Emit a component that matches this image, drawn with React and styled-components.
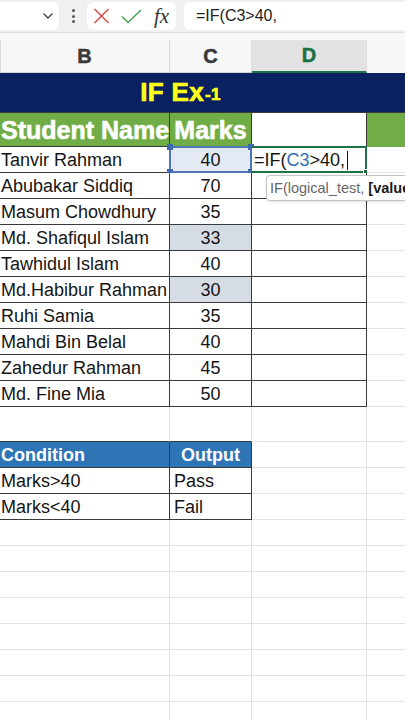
import React from "react";
import styled, { createGlobalStyle } from "styled-components";

const GlobalStyle = createGlobalStyle`
  * {
    box-sizing: border-box;
    margin: 0;
    padding: 0;
  }

  body {
    margin: 0;
    background: #ffffff;
    font-family: "Liberation Sans", Arial, sans-serif;
    overflow: hidden;
  }
`;

const COLUMNS = "170px 82px 115px 1fr";
const DARK = "#3a3a3a";
const FAINT = "#e2e2e2";

const students = [
  { name: "Tanvir Rahman", marks: 40 },
  { name: "Abubakar Siddiq", marks: 70 },
  { name: "Masum Chowdhury", marks: 35 },
  { name: "Md. Shafiqul Islam", marks: 33, shade: true },
  { name: "Tawhidul Islam", marks: 40 },
  { name: "Md.Habibur Rahman", marks: 30, shade: true },
  { name: "Ruhi Samia", marks: 35 },
  { name: "Mahdi Bin Belal", marks: 40 },
  { name: "Zahedur Rahman", marks: 45 },
  { name: "Md. Fine Mia", marks: 50 },
];

const conditions = [
  { rule: "Marks>40", result: "Pass" },
  { rule: "Marks<40", result: "Fail" },
];

function App() {
  return (
    <Page>
      <GlobalStyle />
      <Toolbar>
        <NameBox>
          <svg width="12" height="8" viewBox="0 0 12 8">
            <path d="M1.5 1.5 L6 6 L10.5 1.5" fill="none" stroke="#444" strokeWidth="1.4" />
          </svg>
        </NameBox>
        <Grip>
          <i />
          <i />
          <i />
        </Grip>
        <FuncBox>
          <svg width="17" height="16" viewBox="0 0 17 16">
            <path d="M1.5 1 L15.5 15 M15.5 1 L1.5 15" stroke="#d9534f" strokeWidth="1.6" />
          </svg>
          <svg width="21" height="15" viewBox="0 0 21 15">
            <path d="M1 7.5 L7 13.5 L20 1" fill="none" stroke="#4ea35a" strokeWidth="1.6" />
          </svg>
          <Fx>fx</Fx>
        </FuncBox>
        <FormulaBox>=IF(C3&gt;40,</FormulaBox>
      </Toolbar>

      <HeaderRow>
        <ColLetter />
        <ColLetter>B</ColLetter>
        <ColLetter>C</ColLetter>
        <ColLetter $active>D</ColLetter>
      </HeaderRow>

      <Sheet>
        <TitleRow>
          <Title>
            IF Ex<small>-1</small>
          </Title>
          <Cell $fill="#0a2060" $bottom={DARK} />
        </TitleRow>

        <Row $height={34}>
          <Cell $fill="#70ad47" $right={DARK} $bottom={DARK}>
            <HeadText>Student Name</HeadText>
          </Cell>
          <Cell $fill="#70ad47" $right={DARK} $bottom={DARK} $align="center">
            <HeadText>Marks</HeadText>
          </Cell>
          <Cell $right={DARK} $bottom={DARK} />
          <Cell $fill="#70ad47" />
        </Row>

        {students.map((s, i) => (
          <Row key={s.name}>
            <Cell $right={DARK} $bottom={DARK}>
              {s.name}
            </Cell>
            <Cell
              $right={DARK}
              $bottom={DARK}
              $align="center"
              $fill={i === 0 ? "#e3eaf4" : s.shade ? "#d6dce4" : undefined}
            >
              {s.marks}
              {i === 0 && (
                <RefBox>
                  <Handle $x="left" $y="top" />
                  <Handle $x="right" $y="top" />
                  <Handle $x="left" $y="bottom" />
                  <Handle $x="right" $y="bottom" />
                </RefBox>
              )}
            </Cell>
            <Cell $right={DARK} $bottom={DARK}>
              {i === 0 && (
                <>
                  <EditText>
                    =IF(<Ref>C3</Ref>&gt;40,<Caret />
                  </EditText>
                  <ActiveBox>
                    <FillHandle />
                  </ActiveBox>
                  <Tooltip>
                    IF(logical_test, <b>[value_if_true]</b>, [value_if_false])
                  </Tooltip>
                </>
              )}
            </Cell>
            <Cell $bottom={FAINT} />
          </Row>
        ))}

        <Row $height={35}>
          <Cell $right={FAINT} $bottom={DARK} />
          <Cell $right={FAINT} $bottom={DARK} />
          <Cell $right={FAINT} $bottom={FAINT} />
          <Cell $bottom={FAINT} />
        </Row>

        <Row>
          <Cell $fill="#2e75b6" $right={DARK} $bottom={DARK}>
            <CondHead>Condition</CondHead>
          </Cell>
          <Cell $fill="#2e75b6" $right={DARK} $bottom={DARK} $align="center">
            <CondHead>Output</CondHead>
          </Cell>
          <Cell $right={FAINT} $bottom={FAINT} />
          <Cell $bottom={FAINT} />
        </Row>

        {conditions.map((c) => (
          <Row key={c.rule}>
            <Cell $right={DARK} $bottom={DARK}>
              {c.rule}
            </Cell>
            <Cell $right={DARK} $bottom={DARK} $pad={4}>
              {c.result}
            </Cell>
            <Cell $right={FAINT} $bottom={FAINT} />
            <Cell $bottom={FAINT} />
          </Row>
        ))}

        {Array.from({ length: 8 }).map((_, i) => (
          <Row key={i}>
            <Cell $right={FAINT} $bottom={FAINT} />
            <Cell $right={FAINT} $bottom={FAINT} />
            <Cell $right={FAINT} $bottom={FAINT} />
            <Cell $bottom={FAINT} />
          </Row>
        ))}
      </Sheet>
    </Page>
  );
}

const Page = styled.div`
  width: 405px;
  height: 720px;
  overflow: hidden;
  background: #ffffff;
`;

const Toolbar = styled.div`
  height: 33px;
  display: flex;
  align-items: center;
  background: #f1f1f1;
  border-bottom: 1px solid #e1e1e1;
`;

const NameBox = styled.div`
  width: 59px;
  height: 28px;
  display: flex;
  align-items: center;
  justify-content: flex-end;
  padding-right: 5px;
  background: #ffffff;
  border-radius: 0 6px 6px 0;
`;

const Grip = styled.div`
  width: 28px;
  display: flex;
  flex-direction: column;
  align-items: center;
  gap: 2.5px;

  i {
    width: 3px;
    height: 3px;
    border-radius: 50%;
    background: #555555;
  }
`;

const FuncBox = styled.div`
  width: 89px;
  height: 28px;
  display: flex;
  align-items: center;
  gap: 11px;
  padding-left: 6px;
  background: #ffffff;
  border-radius: 6px;
`;

const Fx = styled.span`
  font-family: "Liberation Serif", "Times New Roman", serif;
  font-style: italic;
  font-size: 21px;
  color: #333333;
  margin-left: 1px;
`;

const FormulaBox = styled.div`
  flex: 1;
  height: 28px;
  margin-left: 8px;
  display: flex;
  align-items: center;
  padding-left: 12px;
  background: #ffffff;
  border-radius: 6px 0 0 6px;
  font-size: 16px;
  color: #222222;
`;

const HeaderRow = styled.div`
  height: 40px;
  display: grid;
  grid-template-columns: 0 ${COLUMNS};
  align-items: end;
  background: #f7f7f7;
`;

const ColLetter = styled.div`
  height: 33px;
  display: flex;
  align-items: center;
  justify-content: center;
  font-size: 20px;
  font-weight: 700;
  -webkit-text-stroke: 0.5px currentColor;
  color: ${(p) => (p.$active ? "#1e7145" : "#3a3a3a")};
  background: ${(p) => (p.$active ? "#e2e2e2" : "transparent")};
  border-right: 1px solid #dcdcdc;
  border-bottom: ${(p) => (p.$active ? "2px solid #1e7145" : "1px solid #d4d4d4")};
`;

const Sheet = styled.div`
  display: flex;
  flex-direction: column;
`;

const Row = styled.div`
  height: ${(p) => p.$height || 26}px;
  display: grid;
  grid-template-columns: ${COLUMNS};
`;

const TitleRow = styled(Row)`
  height: 40px;
`;

const Cell = styled.div`
  position: relative;
  display: flex;
  align-items: center;
  justify-content: ${(p) => (p.$align === "center" ? "center" : "flex-start")};
  padding-top: 2px;
  padding-left: ${(p) => (p.$pad ? p.$pad : p.$align === "center" ? 0 : 1)}px;
  white-space: nowrap;
  font-size: 18px;
  color: #151515;
  background: ${(p) => p.$fill || "#ffffff"};
  border-right: ${(p) => (p.$right ? `1px solid ${p.$right}` : "none")};
  border-bottom: ${(p) => (p.$bottom ? `1px solid ${p.$bottom}` : "none")};
`;

const Title = styled.div`
  grid-column: 1 / 4;
  display: flex;
  align-items: center;
  justify-content: center;
  padding-right: 6px;
  background: #0a2060;
  border-bottom: 1px solid ${DARK};
  font-size: 26px;
  font-weight: 700;
  color: #ffff1a;
  -webkit-text-stroke: 0.7px #ffff1a;
  letter-spacing: 0.3px;

  small {
    font-size: 17px;
    margin-top: 5px;
    margin-left: 1px;
  }
`;

const HeadText = styled.span`
  font-size: 25px;
  font-weight: 700;
  color: #ffffff;
  -webkit-text-stroke: 0.6px #ffffff;
`;

const CondHead = styled.span`
  font-size: 18px;
  font-weight: 700;
  color: #ffffff;
`;

const RefBox = styled.div`
  position: absolute;
  top: -1px;
  left: -1px;
  right: -1px;
  bottom: -1px;
  border: 2px solid #4f77b8;
`;

const Handle = styled.span`
  position: absolute;
  width: 6px;
  height: 6px;
  background: #3f68b0;
  ${(p) => p.$x}: -4px;
  ${(p) => p.$y}: -4px;
`;

const EditText = styled.span`
  display: flex;
  align-items: center;
  font-size: 18px;
  color: #151515;
  padding-left: 1px;
`;

const Ref = styled.span`
  color: #2f6db6;
`;

const Caret = styled.span`
  width: 1px;
  height: 19px;
  margin-left: 2px;
  background: #111111;
`;

const ActiveBox = styled.div`
  position: absolute;
  top: -1px;
  left: 0;
  right: -1px;
  bottom: -1px;
  border: 2px solid #1e7145;
  border-left: none;
`;

const FillHandle = styled.span`
  position: absolute;
  right: -4px;
  bottom: -4px;
  width: 6px;
  height: 6px;
  background: #1e7145;
  border: 1px solid #ffffff;
`;

const Tooltip = styled.div`
  position: absolute;
  top: 28px;
  left: 14px;
  z-index: 5;
  height: 26px;
  display: flex;
  align-items: center;
  padding: 0 6px 0 3px;
  background: #ffffff;
  border: 1px solid #c6c6c6;
  border-radius: 4px;
  box-shadow: 0 1px 3px rgba(0, 0, 0, 0.12);
  font-size: 14.5px;
  color: #666666;
  white-space: nowrap;

  b {
    color: #1a1a1a;
    margin-left: 4px;
  }
`;

export default App;
